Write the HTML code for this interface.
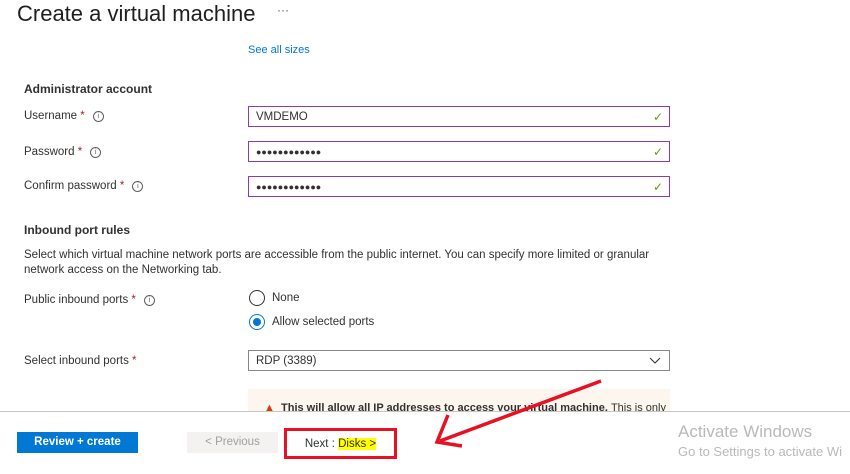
<!DOCTYPE html>
<html><head><style>
body{margin:0;width:850px;height:473px;overflow:hidden;background:#fff;font-family:"Liberation Sans",sans-serif;color:#323130;position:relative}
.a{position:absolute;white-space:nowrap}
.lbl{font-size:11.5px}
.req{color:#a4262c}
.info{display:inline-block;width:9px;height:9px;border:1px solid #605e5c;border-radius:50%;font-size:7px;text-align:center;line-height:9px;vertical-align:1px;margin-left:8px;color:#605e5c}
.inp{position:absolute;left:248px;width:413px;height:19px;border:1px solid #8a3ab9;font-size:11.5px;line-height:20px;padding-left:7px}
.ck{position:absolute;right:6px;top:0;color:#57a300;font-size:12px}
.h{font-size:12px;font-weight:bold}
</style></head><body>
<div class="a" style="left:17px;top:1px;font-size:22px;color:#201f1e">Create a virtual machine</div>
<div class="a" style="left:277px;top:3px;font-size:12px;color:#555">···</div>
<div class="a" style="left:248px;top:44px;font-size:11px;color:#0078d4">See all sizes</div>
<div class="a h" style="left:24px;top:82px">Administrator account</div>
<div class="a lbl" style="left:24px;top:110px">Username <span class="req">*</span><span class="info">i</span></div>
<div class="a lbl" style="left:24px;top:146px">Password <span class="req">*</span><span class="info">i</span></div>
<div class="a lbl" style="left:24px;top:180px">Confirm password <span class="req">*</span><span class="info">i</span></div>
<div class="inp" style="top:106px">VMDEMO<span class="ck">✓</span></div>
<div class="inp" style="top:141px;font-size:9px">●●●●●●●●●●●●<span class="ck" style="font-size:12px">✓</span></div>
<div class="inp" style="top:176px;font-size:9px">●●●●●●●●●●●●<span class="ck" style="font-size:12px">✓</span></div>
<div class="a h" style="left:24px;top:223px">Inbound port rules</div>
<div class="a lbl" style="left:24px;top:248px;line-height:15px">Select which virtual machine network ports are accessible from the public internet. You can specify more limited or granular<br>network access on the Networking tab.</div>
<div class="a lbl" style="left:24px;top:294px">Public inbound ports <span class="req">*</span><span class="info">i</span></div>
<div class="a" style="left:249px;top:290px;width:14px;height:14px;border:1px solid #323130;border-radius:50%"></div>
<div class="a lbl" style="left:272px;top:292px">None</div>
<div class="a" style="left:249px;top:314px;width:14px;height:14px;border:1px solid #0078d4;border-radius:50%"><div style="margin:3px;width:8px;height:8px;border-radius:50%;background:#0078d4"></div></div>
<div class="a lbl" style="left:272px;top:316px">Allow selected ports</div>
<div class="a lbl" style="left:24px;top:355px">Select inbound ports <span class="req">*</span></div>
<div class="a" style="left:248px;top:350px;width:413px;height:19px;border:1px solid #8a8886;font-size:11.5px;line-height:20px;padding-left:7px">RDP (3389)
<svg style="position:absolute;right:8px;top:6px" width="12" height="8"><path d="M1 1L6 6L11 1" stroke="#323130" fill="none"/></svg></div>
<div class="a" style="left:248px;top:389px;width:422px;height:23px;background:#fdf6ee;overflow:hidden">
<div class="a" style="left:16px;top:13px;font-size:11px;font-weight:bold;color:#323130"><span style="color:#d83b01">▲</span> &nbsp;This will allow all IP addresses to access your virtual machine. <span style="font-weight:normal">This is only</span></div></div>
<div class="a" style="left:0;top:411px;width:850px;height:62px;background:#fff;border-top:1px solid #c8c6c4"></div>
<div class="a" style="left:17px;top:432px;width:121px;height:21px;background:#0078d4;color:#fff;font-size:11.5px;font-weight:bold;text-align:center;line-height:21px">Review + create</div>
<div class="a" style="left:187px;top:432px;width:91px;height:21px;background:#f3f2f1;color:#a19f9d;font-size:11.5px;text-align:center;line-height:21px">&lt; Previous</div>
<div class="a" style="left:284px;top:428px;width:107px;height:25px;border:3px solid #e81123;font-size:11.5px;line-height:26px;text-align:center">Next : <span style="background:#ffff00">Disks &gt;</span></div>
<div class="a" style="left:678px;top:422px;font-size:17px;color:#b9b9b9">Activate Windows</div>
<div class="a" style="left:678px;top:444px;font-size:13px;color:#b9b9b9">Go to Settings to activate Wi</div>
<svg class="a" style="left:0;top:0" width="850" height="473"><path d="M601 381L440 441" stroke="#e81123" stroke-width="3.5" fill="none"/><path d="M448 415L437 442L462 446" stroke="#e81123" stroke-width="3.5" fill="none"/></svg>
</body></html>
